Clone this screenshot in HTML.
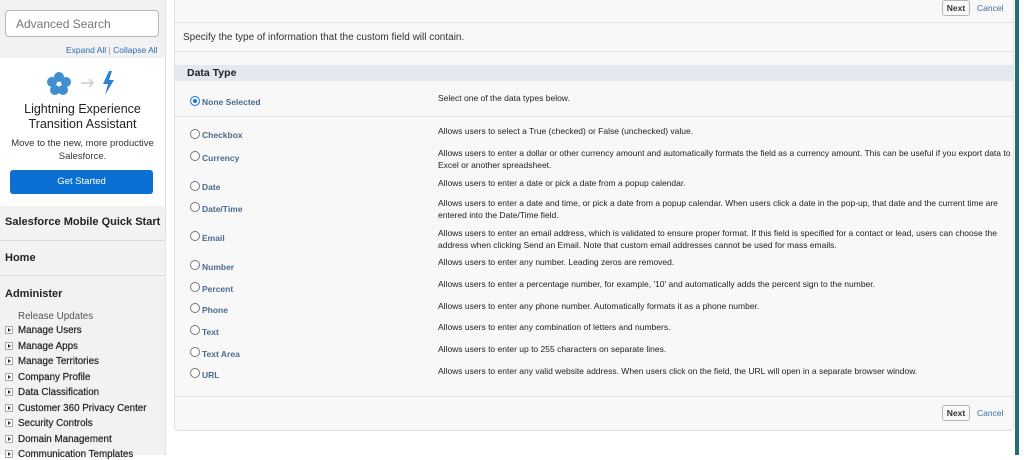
<!DOCTYPE html>
<html><head><meta charset="utf-8"><style>
*{margin:0;padding:0;box-sizing:border-box}
body{width:1024px;height:455px;overflow:hidden;background:#fff;font-family:"Liberation Sans",Arial,sans-serif;position:relative;color:#222}
.a{position:absolute;white-space:nowrap}
#side{position:absolute;left:0;top:0;width:166px;height:455px;background:#f2f2f2;border-right:1px solid #e0e0e0}
.search{left:5px;top:10px;width:154px;height:27px;border:1px solid #b8b8b8;border-radius:4px;background:#fff;font-size:12px;color:#777;padding:6px 0 0 10px}
.card{left:0;top:58px;width:165px;height:148px;background:#fff}
.h{font-size:11px;font-weight:bold;color:#222;left:5px}
.nav{font-size:9.8px;color:#222;left:18px;-webkit-text-stroke:0.2px #222}
.tri{position:absolute;left:5px;width:8px;height:8px;border:1px solid #aaa;background:#fff}
.tri:after{content:"";position:absolute;left:2px;top:1px;border-left:3px solid #333;border-top:2.5px solid transparent;border-bottom:2.5px solid transparent}
#panel{position:absolute;left:174px;top:-5px;width:840px;height:436px;background:#f8f8f8;border:1px solid #e2e2e2;border-radius:4px}
.lbl{font-size:8.5px;font-weight:bold;color:#4a6a8c;left:202px}
.rad{position:absolute;left:190px;width:10px;height:10px;border:1px solid #777;border-radius:50%;background:#fff}
.d{font-size:8.5px;color:#222;left:438px;line-height:12px}
.btn{position:absolute;width:28px;height:16px;border:1px solid #b5b5b5;border-radius:3px;background:#fafafa;font-size:8.5px;font-weight:bold;color:#333;text-align:center;line-height:14px}
.cn{font-size:8.5px;color:#3a6ea8}
</style></head><body>
<div id="side">
<div class="a search">Advanced Search</div>
<div class="a" style="left:66px;top:45px;font-size:8.5px;color:#2a6bb0">Expand All <span style="color:#999">|</span> Collapse All</div>
<div class="a card"></div>
<svg class="a" style="left:46px;top:70px" width="74" height="26" viewBox="0 0 74 26">
<g fill="#3f8fd0"><circle cx="13" cy="7" r="5"/><circle cx="6" cy="12" r="5"/><circle cx="20" cy="12" r="5"/><circle cx="9" cy="20" r="5"/><circle cx="17" cy="20" r="5"/></g>
<circle cx="13" cy="14" r="2" fill="#fff"/>
<path d="M35 13h12M43 9l4 4-4 4" stroke="#ccc" stroke-width="1.5" fill="none"/>
<path d="M63 1l-6 13h5l-3 11 9-15h-5l3-9z" fill="#2d7fd0"/>
</svg>
<div class="a" style="left:0;width:165px;top:102px;text-align:center;font-size:12.5px;line-height:15px;color:#222;white-space:normal">Lightning Experience<br>Transition Assistant</div>
<div class="a" style="left:0;width:165px;top:137px;text-align:center;font-size:9.5px;line-height:13px;color:#333;white-space:normal">Move to the new, more productive<br>Salesforce.</div>
<div class="a" style="left:10px;top:170px;width:143px;height:24px;background:#0a70d4;border-radius:3px;color:#fff;font-size:9.5px;text-align:center;line-height:24px">Get Started</div>
<div class="a h" style="top:216px">Salesforce Mobile Quick Start</div>
<div class="a" style="left:0;top:240px;width:165px;border-top:1px solid #ddd"></div>
<div class="a h" style="top:252px">Home</div>
<div class="a" style="left:0;top:275px;width:165px;border-top:1px solid #ddd"></div>
<div class="a h" style="top:288px">Administer</div>
<div class="a nav" style="top:311px;color:#555;-webkit-text-stroke:0">Release Updates</div>
<div class="tri" style="top:326px"></div><div class="a nav" style="top:325px">Manage Users</div>
<div class="tri" style="top:342px"></div><div class="a nav" style="top:341px">Manage Apps</div>
<div class="tri" style="top:357px"></div><div class="a nav" style="top:356px">Manage Territories</div>
<div class="tri" style="top:373px"></div><div class="a nav" style="top:372px">Company Profile</div>
<div class="tri" style="top:388px"></div><div class="a nav" style="top:387px">Data Classification</div>
<div class="tri" style="top:404px"></div><div class="a nav" style="top:403px">Customer 360 Privacy Center</div>
<div class="tri" style="top:419px"></div><div class="a nav" style="top:418px">Security Controls</div>
<div class="tri" style="top:435px"></div><div class="a nav" style="top:434px">Domain Management</div>
<div class="tri" style="top:450px"></div><div class="a nav" style="top:449px">Communication Templates</div>
</div>
<div id="panel"></div>
<div class="a" style="left:1015px;top:0;width:4px;height:455px;background:#1f6e7a"></div>
<div class="btn a" style="left:942px;top:0">Next</div><div class="a cn" style="left:977px;top:3px">Cancel</div>
<div class="a" style="left:175px;top:22px;width:838px;border-top:1px solid #e2e2e2"></div>
<div class="a" style="left:183px;top:32px;font-size:10px;color:#333">Specify the type of information that the custom field will contain.</div>
<div class="a" style="left:175px;top:51px;width:838px;border-top:1px solid #e2e2e2"></div>
<div class="a" style="left:175px;top:65px;width:838px;height:16px;background:#e4e8f0"></div>
<div class="a" style="left:187px;top:67px;font-size:10.5px;font-weight:bold;color:#222">Data Type</div>
<div class="rad" style="top:96px;border-color:#1a73e8;background:#1a73e8;box-shadow:inset 0 0 0 2px #fff"></div>
<div class="a lbl" style="top:97px">None Selected</div>
<div class="a d" style="top:92px">Select one of the data types below.</div>
<div class="a" style="left:175px;top:116px;width:838px;border-top:1px solid #e2e2e2"></div>
<div class="rad" style="top:129px"></div><div class="a lbl" style="top:130px">Checkbox</div>
<div class="a d" style="top:125px">Allows users to select a True (checked) or False (unchecked) value.</div>
<div class="rad" style="top:151px"></div><div class="a lbl" style="top:153px">Currency</div>
<div class="a d" style="top:147px">Allows users to enter a dollar or other currency amount and automatically formats the field as a currency amount. This can be useful if you export data to<br>Excel or another spreadsheet.</div>
<div class="rad" style="top:181px"></div><div class="a lbl" style="top:182px">Date</div>
<div class="a d" style="top:177px">Allows users to enter a date or pick a date from a popup calendar.</div>
<div class="rad" style="top:202px"></div><div class="a lbl" style="top:204px">Date/Time</div>
<div class="a d" style="top:197px">Allows users to enter a date and time, or pick a date from a popup calendar. When users click a date in the pop-up, that date and the current time are<br>entered into the Date/Time field.</div>
<div class="rad" style="top:231px"></div><div class="a lbl" style="top:233px">Email</div>
<div class="a d" style="top:227px">Allows users to enter an email address, which is validated to ensure proper format. If this field is specified for a contact or lead, users can choose the<br>address when clicking Send an Email. Note that custom email addresses cannot be used for mass emails.</div>
<div class="rad" style="top:260px"></div><div class="a lbl" style="top:262px">Number</div>
<div class="a d" style="top:256px">Allows users to enter any number. Leading zeros are removed.</div>
<div class="rad" style="top:282px"></div><div class="a lbl" style="top:284px">Percent</div>
<div class="a d" style="top:278px">Allows users to enter a percentage number, for example, '10' and automatically adds the percent sign to the number.</div>
<div class="rad" style="top:303px"></div><div class="a lbl" style="top:305px">Phone</div>
<div class="a d" style="top:300px">Allows users to enter any phone number. Automatically formats it as a phone number.</div>
<div class="rad" style="top:325px"></div><div class="a lbl" style="top:327px">Text</div>
<div class="a d" style="top:321px">Allows users to enter any combination of letters and numbers.</div>
<div class="rad" style="top:347px"></div><div class="a lbl" style="top:349px">Text Area</div>
<div class="a d" style="top:343px">Allows users to enter up to 255 characters on separate lines.</div>
<div class="rad" style="top:368px"></div><div class="a lbl" style="top:370px">URL</div>
<div class="a d" style="top:365px">Allows users to enter any valid website address. When users click on the field, the URL will open in a separate browser window.</div>
<div class="a" style="left:175px;top:396px;width:838px;border-top:1px solid #e2e2e2"></div>
<div class="btn a" style="left:942px;top:405px">Next</div><div class="a cn" style="left:977px;top:408px">Cancel</div>
</body></html>
